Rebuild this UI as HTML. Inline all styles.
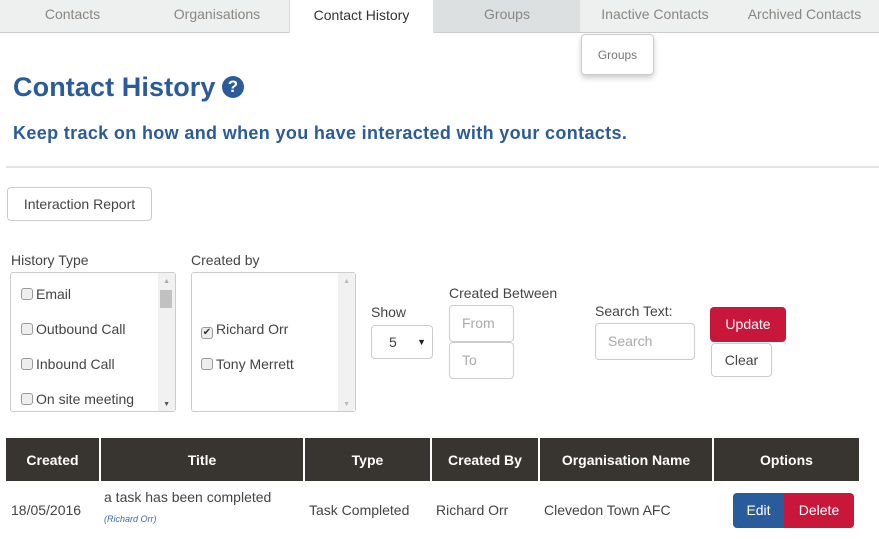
<!DOCTYPE html><html><head><style>
*{box-sizing:border-box;margin:0;padding:0}
body{width:879px;height:539px;overflow:hidden;background:#fff;font-family:"Liberation Sans",sans-serif;position:relative;color:#444}
.a{position:absolute}
.tab{position:absolute;top:0;height:33px;line-height:29px;text-align:center;font-size:14px;color:#8a8580;background:#eef0f0;border-bottom:1px solid #ccc}
.box{position:absolute;border:1px solid #ccc;border-radius:4px;background:#fff}
.lbl{position:absolute;font-size:14px;color:#444}
.cb{display:inline-block;width:12px;height:12px;border:1px solid #999;border-radius:3px;background:#eee;margin-right:3px;vertical-align:-1px}
.it{position:absolute;font-size:14px;color:#444;white-space:nowrap}
.ph{color:#aaa;font-size:14px}
th{background:#38342f;color:#fff;font-size:14px;font-weight:bold;border-right:2px solid #fff;height:43px;padding:0}
td{font-size:14px;color:#444;padding:0 0 0 5px;height:58px}
</style></head><body>
<div class="tab" style="left:0;width:145px">Contacts</div>
<div class="tab" style="left:145px;width:144px">Organisations</div>
<div class="tab" style="left:289px;width:145px;background:#fff;color:#333;border-bottom:none;border-left:1px solid #ddd;border-right:1px solid #ddd;line-height:31px">Contact History</div>
<div class="tab" style="left:434px;width:146px;background:#dde0e0">Groups</div>
<div class="tab" style="left:580px;width:150px">Inactive Contacts</div>
<div class="tab" style="left:730px;width:149px">Archived Contacts</div>
<div class="box" style="left:581px;top:34px;width:73px;height:41px;box-shadow:0 3px 6px rgba(0,0,0,.2);font-size:12px;color:#777;text-align:center;line-height:40px">Groups</div>
<div class="a" style="left:13px;top:72px;font-size:27px;font-weight:bold;color:#2a5b9a;letter-spacing:0.1px">Contact History</div>
<div class="a" style="left:222px;top:76px;width:22px;height:22px;border-radius:50%;background:#2a5b9a;color:#fff;font-weight:bold;font-size:17px;text-align:center;line-height:22px">?</div>
<div class="a" style="left:13px;top:123px;font-size:18px;font-weight:bold;color:#2a5b9a;letter-spacing:0.35px;white-space:nowrap">Keep track on how and when you have interacted with your contacts.</div>
<div class="a" style="left:6px;top:166px;width:873px;height:2px;background:#e3e3e3"></div>
<div class="box" style="left:7px;top:187px;width:145px;height:34px;font-size:14px;text-align:center;line-height:32px;color:#444">Interaction Report</div>
<div class="lbl" style="left:11px;top:252px">History Type</div>
<div class="box" style="left:10px;top:272px;width:166px;height:140px;border-radius:3px">
<div class="a" style="right:0;top:0;width:17px;height:138px;background:#f1f1f1"></div>
<div class="a" style="right:3px;top:17px;width:12px;height:18px;background:#c1c1c1"></div>
<div class="a" style="right:5px;top:5px;font-size:7px;color:#aaa">▲</div>
<div class="a" style="right:5px;bottom:3px;font-size:7px;color:#555">▼</div>
<div class="it" style="left:10px;top:13px"><span class="cb"></span>Email</div>
<div class="it" style="left:10px;top:48px"><span class="cb"></span>Outbound Call</div>
<div class="it" style="left:10px;top:83px"><span class="cb"></span>Inbound Call</div>
<div class="it" style="left:10px;top:118px"><span class="cb"></span>On site meeting</div>
</div>
<div class="lbl" style="left:191px;top:252px">Created by</div>
<div class="box" style="left:191px;top:272px;width:165px;height:140px;border-radius:3px">
<div class="a" style="right:0;top:0;width:17px;height:138px;background:#f1f1f1"></div>
<div class="a" style="right:5px;top:5px;font-size:7px;color:#bbb">▲</div>
<div class="a" style="right:5px;bottom:3px;font-size:7px;color:#bbb">▼</div>
<div class="it" style="left:9px;top:48px"><span class="cb" style="font-size:10px;line-height:10px;text-align:center;color:#333">✔</span>Richard Orr</div>
<div class="it" style="left:9px;top:83px"><span class="cb"></span>Tony Merrett</div>
</div>
<div class="lbl" style="left:371px;top:304px">Show</div>
<div class="box" style="left:371px;top:325px;width:62px;height:34px;font-size:14px;line-height:32px;padding-left:17px">5<span style="position:absolute;right:6px;font-size:9px;color:#222">▼</span></div>
<div class="lbl" style="left:449px;top:285px">Created Between</div>
<div class="box ph" style="left:449px;top:305px;width:65px;height:37px;line-height:35px;padding-left:12px">From</div>
<div class="box ph" style="left:449px;top:342px;width:65px;height:37px;line-height:35px;padding-left:12px">To</div>
<div class="lbl" style="left:595px;top:303px">Search Text:</div>
<div class="box ph" style="left:595px;top:323px;width:100px;height:37px;line-height:35px;padding-left:12px">Search</div>
<div class="a" style="left:710px;top:307px;width:76px;height:35px;background:#c8173a;border-radius:4px;color:#fff;font-size:14px;text-align:center;line-height:35px">Update</div>
<div class="box" style="left:711px;top:343px;width:61px;height:34px;font-size:14px;text-align:center;line-height:32px;color:#444">Clear</div>
<table class="a" style="left:6px;top:438px;width:853px;border-collapse:collapse">
<tr><th style="width:94px">Created</th><th style="width:204px">Title</th><th style="width:127px">Type</th><th style="width:108px">Created By</th><th style="width:174px">Organisation Name</th><th style="border-right:none">Options</th></tr>
<tr><td>18/05/2016</td><td style="vertical-align:top;padding-top:8px;padding-left:4px">a task has been completed<div style="font-size:9px;font-style:italic;color:#3a6ab0;margin-top:9px">(Richard Orr)</div></td><td>Task Completed</td><td>Richard Orr</td><td>Clevedon Town AFC</td>
<td style="padding-left:20px"><span style="display:inline-block;width:51px;height:35px;background:#2a5b9a;color:#fff;border-radius:4px 0 0 4px;text-align:center;line-height:35px">Edit</span><span style="display:inline-block;width:70px;height:35px;background:#c8173a;color:#fff;border-radius:0 4px 4px 0;text-align:center;line-height:35px">Delete</span></td></tr>
</table>
</body></html>
